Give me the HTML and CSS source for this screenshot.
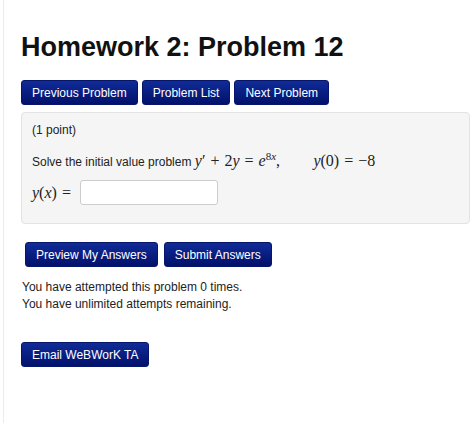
FILE: index.html
```html
<!DOCTYPE html>
<html lang="en">
<head>
    <meta charset="UTF-8">
    <title>Homework 2: Problem 12</title>
    <link rel="stylesheet" href="styles.css">
</head>
<body>

    <div class="page">
        <!-- Title -->
        <h1 class="title">Homework 2: Problem 12</h1>

        <!-- Problem navigation -->
        <div class="nav">
            <a class="btn">Previous Problem</a>
            <a class="btn">Problem List</a>
            <a class="btn">Next Problem</a>
        </div>

        <!-- Problem body -->
        <div class="problem">
            <p class="points">(1 point)</p>
            <p class="statement">
                Solve the initial value problem
                <span class="math"><i>y</i>&#8242;<span class="op">+</span>2<i>y</i><span class="op">=</span><i>e</i><sup>8<i>x</i></sup>,</span>
                <span class="math gap"><i>y</i>(0)<span class="op">=</span>&minus;8</span>
            </p>
            <div class="answer">
                <span class="math"><i>y</i>(<i>x</i>)<span class="op">=</span></span>
                <input type="text" class="answer-input">
            </div>
        </div>

        <!-- Submit -->
        <div class="submit">
            <a class="btn">Preview My Answers</a>
            <a class="btn">Submit Answers</a>
        </div>

        <div class="attempts">
            <p>You have attempted this problem 0 times.</p>
            <p>You have unlimited attempts remaining.</p>
        </div>

        <div class="email">
            <a class="btn">Email WeBWorK TA</a>
        </div>
    </div>

</body>
</html>
```

FILE: styles.css
```css
/* Global Styles */
body {
    margin: 0;
    font-family: "Liberation Sans", Arial, sans-serif;
    font-size: 12px;
    color: #222;
    background: #fff;
}

.page {
    margin-left: 3px;
    border-left: 1px solid #ececec;
    min-height: 423px;
    padding: 0 4px 0 17px;
}

/* Title */
.title {
    margin: 0;
    padding-top: 31px;
    font-size: 27px;
    line-height: 32px;
    font-weight: bold;
    color: #111;
}

/* Buttons */
.btn {
    display: inline-block;
    height: 25px;
    line-height: 24px;
    padding: 0 10px;
    color: #fff;
    font-size: 12px;
    border-radius: 3px;
    background: linear-gradient(#102b98, #02116b);
    border: 1px solid #06166a;
    box-sizing: border-box;
    cursor: pointer;
}

.nav {
    display: flex;
    gap: 4px;
    margin-top: 17px;
}

/* Problem Box */
.problem {
    margin-top: 7px;
    background: #f5f5f5;
    border: 1px solid #e3e3e3;
    border-radius: 4px;
    padding: 9px 10px 18px;
}

.problem p {
    margin: 0;
}

.points {
    line-height: 16px;
}

.statement {
    margin-top: 14px !important;
    line-height: 18px;
}

.math {
    font-family: "Liberation Serif", "Times New Roman", serif;
    font-size: 16px;
    white-space: nowrap;
}

.math .op {
    margin: 0 5px;
}

.math sup {
    font-size: 11px;
    line-height: 0;
}

.gap {
    margin-left: 30px;
}

.answer {
    display: flex;
    align-items: center;
    gap: 4px;
    margin-top: 9px;
}

.answer-input {
    width: 138px;
    height: 25px;
    box-sizing: border-box;
    border: 1px solid #ccc;
    border-radius: 3px;
    background: #fff;
    margin: 0;
}

/* Submit */
.submit {
    display: flex;
    gap: 6px;
    margin-top: 18px;
    padding-left: 4px;
}

.attempts {
    margin-top: 12px;
    padding-left: 1px;
}

.attempts p {
    margin: 0;
    line-height: 17px;
}

.email {
    margin-top: 29px;
}
```
